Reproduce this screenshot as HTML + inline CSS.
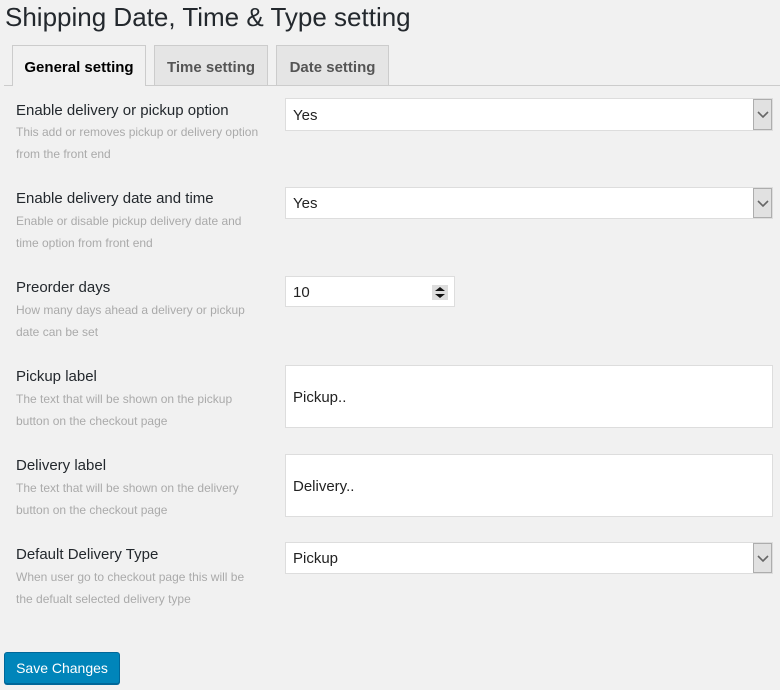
<!DOCTYPE html>
<html><head><style>
body{margin:0;width:780px;height:690px;background:#f1f1f1;font-family:"Liberation Sans",sans-serif;position:relative;overflow:hidden;color:#23282d}
.a{position:absolute}
h1{position:absolute;left:5px;top:2px;margin:0;font-size:26px;font-weight:400;color:#23282d}
.tab{position:absolute;top:45px;height:40px;box-sizing:border-box;border:1px solid #ccc;border-bottom:none;background:#e5e5e5;font-size:15px;font-weight:bold;color:#555;line-height:43px;text-align:center}
.tab.act{background:#f1f1f1;color:#000;height:41px}
.lbl{position:absolute;left:16px;font-size:15px;color:#23282d}
.d{position:absolute;left:16px;font-size:12px;color:#aaa;line-height:22px;width:260px}
.in{position:absolute;left:285px;background:#fff;border:1px solid #ddd;box-sizing:border-box;font-size:15px;color:#222;padding-left:7px}
.arr{position:absolute;right:0;top:0;bottom:0;width:19px;background:#e1e1e1;border:1px solid #adadad;box-sizing:border-box}
.arr svg{position:absolute;left:3px;top:11px}
</style></head><body>
<h1>Shipping Date, Time &amp; Type setting</h1>
<div class="a" style="left:4px;top:85px;width:776px;height:1px;background:#ccc"></div>
<div class="tab act" style="left:12px;width:134px">General setting</div>
<div class="tab" style="left:154px;width:114px">Time setting</div>
<div class="tab" style="left:276px;width:113px">Date setting</div>

<div class="lbl" style="top:102px">Enable delivery or pickup option</div>
<div class="d" style="top:121px">This add or removes pickup or delivery option<br>from the front end</div>
<div class="in" style="top:98px;width:488px;height:33px;line-height:33px">Yes<div class="arr"><svg width="12" height="8"><path d="M1 1l5 5 5-5" stroke="#666" stroke-width="1.6" fill="none"/></svg></div></div>

<div class="lbl" style="top:190px">Enable delivery date and time</div>
<div class="d" style="top:210px">Enable or disable pickup delivery date and<br>time option from front end</div>
<div class="in" style="top:187px;width:488px;height:32px;line-height:32px">Yes<div class="arr"><svg width="12" height="8"><path d="M1 1l5 5 5-5" stroke="#666" stroke-width="1.6" fill="none"/></svg></div></div>

<div class="lbl" style="top:279px">Preorder days</div>
<div class="d" style="top:299px">How many days ahead a delivery or pickup<br>date can be set</div>
<div class="in" style="top:276px;width:170px;height:31px;line-height:31px">10
<svg class="a" style="left:146px;top:8px" width="16" height="15"><rect width="16" height="15" fill="#ddd"/><path d="M3 6l5-4 5 4z M3 9l5 4 5-4z" fill="#111"/></svg></div>

<div class="lbl" style="top:368px">Pickup label</div>
<div class="d" style="top:388px">The text that will be shown on the pickup<br>button on the checkout page</div>
<div class="in" style="top:365px;width:488px;height:63px;line-height:63px">Pickup..</div>

<div class="lbl" style="top:457px">Delivery label</div>
<div class="d" style="top:477px">The text that will be shown on the delivery<br>button on the checkout page</div>
<div class="in" style="top:454px;width:488px;height:63px;line-height:63px">Delivery..</div>

<div class="lbl" style="top:546px">Default Delivery Type</div>
<div class="d" style="top:566px">When user go to checkout page this will be<br>the defualt selected delivery type</div>
<div class="in" style="top:542px;width:488px;height:32px;line-height:32px">Pickup<div class="arr"><svg width="12" height="8"><path d="M1 1l5 5 5-5" stroke="#666" stroke-width="1.6" fill="none"/></svg></div></div>

<div class="a" style="left:4px;top:652px;width:116px;height:32px;background:#0085ba;border:1px solid #006799;box-sizing:border-box;border-radius:3px;box-shadow:0 1px 0 #006799;color:#fff;font-size:14px;line-height:30px;text-align:center">Save Changes</div>
</body></html>
